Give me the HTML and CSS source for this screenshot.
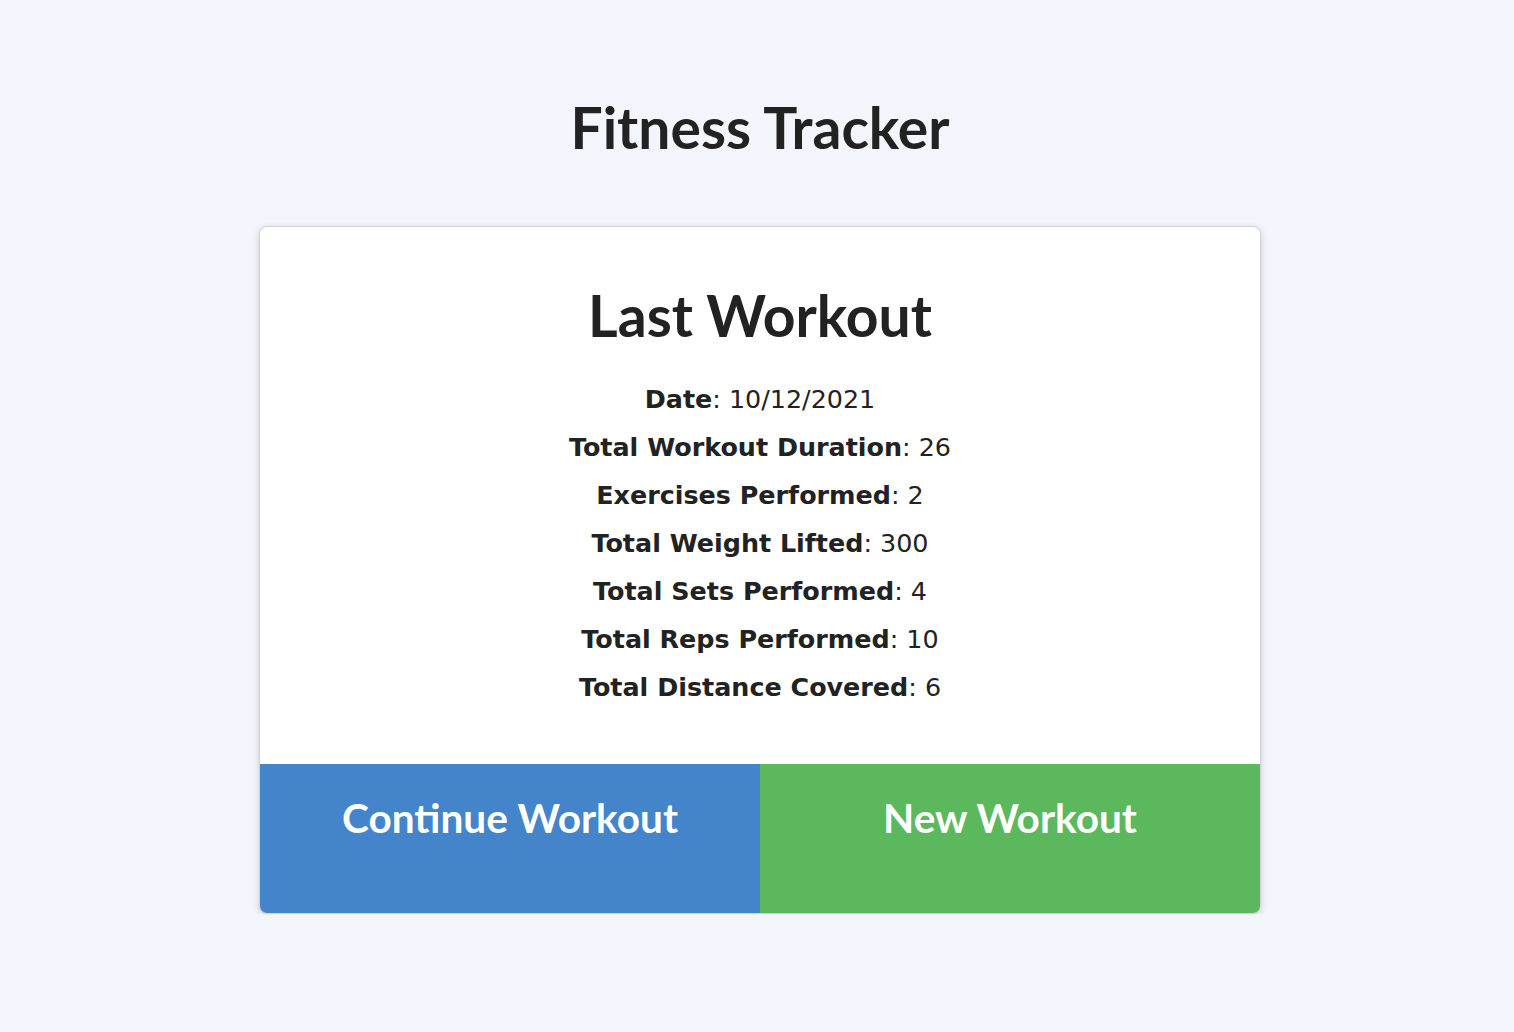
FILE: index.html
```html
<!DOCTYPE html>
<html>
<head>
<meta charset="utf-8">
<link rel="stylesheet" href="styles.css">
</head>
<body>
<div class="page">
  <h1 class="title">Fitness Tracker</h1>
  <div class="card">
    <div class="card-body">
      <h2 class="card-title">Last Workout</h2>
      <div class="stats">
        <p><b>Date</b>: 10/12/2021</p>
        <p><b>Total Workout Duration</b>: 26</p>
        <p><b>Exercises Performed</b>: 2</p>
        <p><b>Total Weight Lifted</b>: 300</p>
        <p><b>Total Sets Performed</b>: 4</p>
        <p><b>Total Reps Performed</b>: 10</p>
        <p><b>Total Distance Covered</b>: 6</p>
      </div>
    </div>
    <div class="actions">
      <a class="btn btn-continue">Continue Workout</a>
      <a class="btn btn-new">New Workout</a>
    </div>
  </div>
</div>
</body>
</html>
```
FILE: styles.css
```css
html, body {
  margin: 0;
  padding: 0;
}
body {
  background: #f2f6fc;
  color: #222;
  font-family: "DejaVu Sans", Verdana, sans-serif;
}
.page {
  display: flex;
  flex-direction: column;
  align-items: center;
  padding-top: 94px;
  padding-left: 6px;
}
.title {
  font-family: Lato, sans-serif;
  font-weight: 700;
  font-size: 57px;
  line-height: 66px;
  margin: 0 0 66px 0;
  color: #222;
}
.card {
  width: 1000px;
  background: #fff;
  border: 1px solid #cfd2d6;
  border-radius: 8px;
  box-shadow: 0 2px 7px rgba(0,0,0,0.16);
  overflow: hidden;
}
.card-body {
  padding: 52px 0 53px;
  text-align: center;
}
.card-title {
  font-family: Lato, sans-serif;
  font-weight: 700;
  font-size: 57px;
  line-height: 72px;
  margin: 0 0 24px;
}
.stats p {
  margin: 0;
  font-size: 25.4px;
  line-height: 48px;
}
.stats b {
  font-weight: 700;
}
.actions {
  display: flex;
}
.btn {
  flex: 1;
  height: 149px;
  box-sizing: border-box;
  padding-top: 30px;
  text-align: center;
  color: #fff;
  font-family: Lato, sans-serif;
  font-weight: 700;
  font-size: 40.6px;
  line-height: 48px;
}
.btn-continue {
  background: #4484cb;
}
.btn-new {
  background: #5cb85c;
}
```
